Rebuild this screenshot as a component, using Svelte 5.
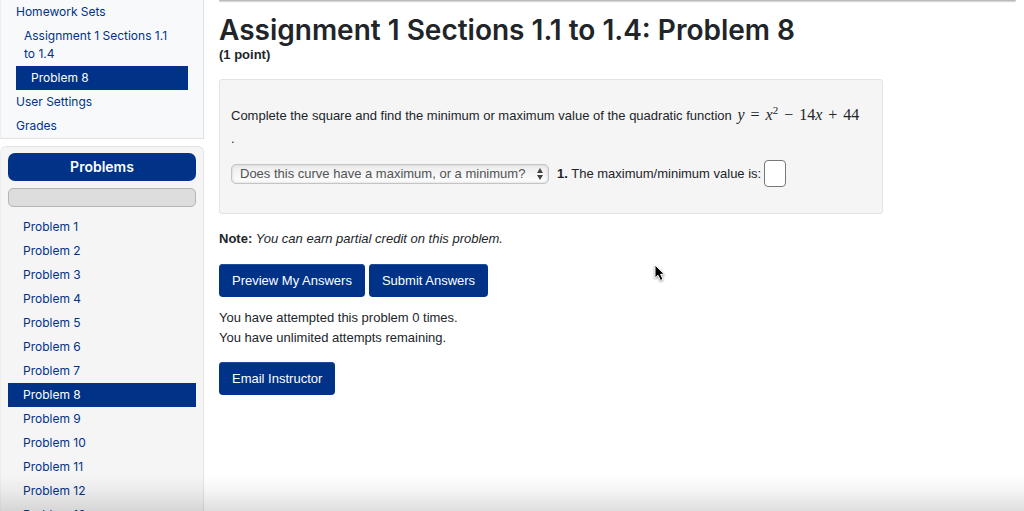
<script lang="ts">
  const problems = Array.from({ length: 13 }, (_, i) => i + 1);
  const current = 8;

  let choice = $state('');
  let answer = $state('');
</script>

<div class="page">
  <aside class="sidebar">
    <nav class="site-nav" aria-label="Main menu">
      <a href="#sets">Homework Sets</a>
      <a class="level-1" href="#set">Assignment 1 Sections 1.1 to 1.4</a>
      <a class="level-2 active" href="#problem-8">Problem 8</a>
      <a href="#settings">User Settings</a>
      <a href="#grades">Grades</a>
    </nav>

    <nav class="problem-nav" aria-label="Problems">
      <h2>Problems</h2>
      <div class="progress"></div>
      <ul>
        {#each problems as n}
          <li><a class:active={n === current} href="#problem-{n}">Problem {n}</a></li>
        {/each}
      </ul>
    </nav>
  </aside>

  <main>
    <div class="masthead-edge"></div>
    <h1>Assignment 1 Sections 1.1 to 1.4: Problem 8</h1>
    <p class="points">(1 point)</p>

    <form id="problem" class="problem" onsubmit={(e) => e.preventDefault()}>
      <p class="statement">
        Complete the square and find the minimum or maximum value of the quadratic function
        <span class="math"><i>y</i><span class="op">=</span><i>x</i><sup>2</sup><span class="op">−</span>14<i>x</i><span class="op">+</span>44</span><br />.
      </p>
      <div class="answer-row">
        <span class="select-wrap">
          <select bind:value={choice} aria-label="Maximum or minimum">
            <option value="">Does this curve have a maximum, or a minimum?</option>
            <option value="max">Maximum</option>
            <option value="min">Minimum</option>
          </select>
          <svg class="arrows" viewBox="0 0 6 12" aria-hidden="true">
            <path d="M3 0 6 5H0ZM0 7H6L3 12Z" />
          </svg>
        </span>
        <label for="answer"><b>1.</b> The maximum/minimum value is:</label>
        <input id="answer" type="text" autocomplete="off" bind:value={answer} />
      </div>
    </form>

    <p class="note"><b>Note:</b> <i>You can earn partial credit on this problem.</i></p>

    <div class="buttons">
      <button type="button">Preview My Answers</button>
      <button type="submit" form="problem">Submit Answers</button>
    </div>

    <p class="attempts">
      You have attempted this problem 0 times.<br />
      You have unlimited attempts remaining.
    </p>

    <button type="button">Email Instructor</button>
  </main>

  <svg class="cursor" viewBox="0 0 12 18" aria-hidden="true">
    <path d="M1 1V14L4 11.300L6.500 16.500L9 15.300L6.600 10.300H10.500Z" />
  </svg>
  <div class="fade"></div>
</div>

<style>
  :global(body) {
    margin: 0;
    background: #fff;
  }

  .page {
    position: relative;
    display: flex;
    height: 100vh;
    overflow: hidden;
    font-family: 'Liberation Sans', Arial, sans-serif;
    font-size: 13px;
    line-height: 20px;
    color: #212529;
  }

  .page * {
    box-sizing: border-box;
  }

  h1,
  h2,
  p,
  ul {
    margin: 0;
    padding: 0;
  }

  /* sidebar */
  .sidebar {
    flex: 0 0 204px;
    font-family: Inter, sans-serif;
    font-size: 12px;
    line-height: 18px;
  }

  .sidebar a {
    display: block;
    padding: 3px 0;
    color: #003388;
    text-decoration: none;
  }

  .site-nav {
    padding: 0 15px;
    background: #f8f9fa;
    border: 1px solid #e0e0e0;
    border-top: 0;
    border-left-color: #eee;
  }

  .site-nav .level-1 {
    padding-left: 8px;
    padding-right: 16px;
  }

  .site-nav .level-2 {
    padding-left: 15px;
  }

  .sidebar a.active {
    background: #003388;
    color: #fff;
  }

  .problem-nav {
    margin-top: 7px;
    padding: 6px 7px;
    background: #f5f5f5;
    border: 1px solid #e3e3e3;
    border-left-color: #eee;
    border-radius: 6px;
  }

  h2 {
    background: #003388;
    color: #fff;
    border-radius: 7px;
    font-size: 14px;
    font-weight: 600;
    line-height: 28px;
    text-align: center;
  }

  .progress {
    height: 19px;
    margin: 7px 0 8px;
    background: #ddd;
    border: 1px solid #b5b5b5;
    border-radius: 5px;
  }

  ul {
    list-style: none;
  }

  .problem-nav a {
    padding-left: 15px;
  }

  /* content */
  main {
    flex: 1;
    min-width: 0;
    padding: 0 8px 0 15px;
  }

  .masthead-edge {
    height: 1px;
    background: #bbb;
    box-shadow: 0 1px 1px #ccc;
    border-radius: 0 0 3px 3px;
  }

  h1 {
    margin-top: 13px;
    font-family: Inter, sans-serif;
    font-size: 28px;
    font-weight: 600;
    line-height: 32px;
  }

  .points {
    font-weight: 700;
    line-height: 18px;
  }

  .problem {
    width: 83.3333%;
    margin-top: 15px;
    padding: 24px 11px 26px;
    background: #f5f5f5;
    border: 1px solid #e3e3e3;
    border-radius: 3px;
  }

  .statement {
    line-height: 23px;
  }

  .math {
    margin-left: 2px;
    font-family: 'Liberation Serif', serif;
    font-size: 16px;
    line-height: 16px;
    white-space: nowrap;
  }

  .math sup {
    font-size: 11px;
    line-height: 0;
  }

  .op {
    margin: 0 6px;
  }

  .answer-row {
    display: flex;
    align-items: center;
    margin-top: 10px;
    white-space: nowrap;
  }

  .select-wrap {
    position: relative;
    margin-right: 8px;
  }

  select {
    display: block;
    height: 20px;
    padding: 0 22px 0 8px;
    appearance: none;
    background: linear-gradient(#ececec, #fff);
    border: 1px solid #c4c4c4;
    border-radius: 5px;
    box-shadow: inset 0 0 3px #ccc;
    color: #505356;
    font: inherit;
    line-height: 18px;
  }

  .arrows {
    position: absolute;
    top: 4px;
    right: 6px;
    width: 6px;
    height: 12px;
    fill: #444;
    pointer-events: none;
  }

  input {
    width: 22px;
    height: 27px;
    margin-left: 3px;
    padding: 2px;
    background: #fff;
    border: 1px solid #777;
    border-radius: 4px;
    font: inherit;
  }

  .note {
    margin-top: 15px;
  }

  .buttons {
    display: flex;
    gap: 4px;
    margin: 15px 0 11px;
  }

  button {
    height: 33px;
    padding: 0 13px;
    background: #003388;
    border: 0;
    border-radius: 4px;
    box-shadow: inset 0 1px 0 #1f4d99;
    color: #fff;
    font: inherit;
    cursor: pointer;
  }

  .attempts {
    margin-bottom: 14px;
  }

  /* pointer and bottom shade lie over the page */
  .cursor {
    position: absolute;
    top: 264px;
    left: 654px;
    width: 12px;
    height: 18px;
    fill: #000;
    stroke: #fff;
    filter: drop-shadow(0 1px 1px #999);
  }

  .fade {
    position: absolute;
    right: 0;
    bottom: 0;
    left: 0;
    height: 36px;
    background: linear-gradient(transparent, rgba(0, 0, 0, 0.05) 50%, rgba(0, 0, 0, 0.13));
    pointer-events: none;
  }
</style>
